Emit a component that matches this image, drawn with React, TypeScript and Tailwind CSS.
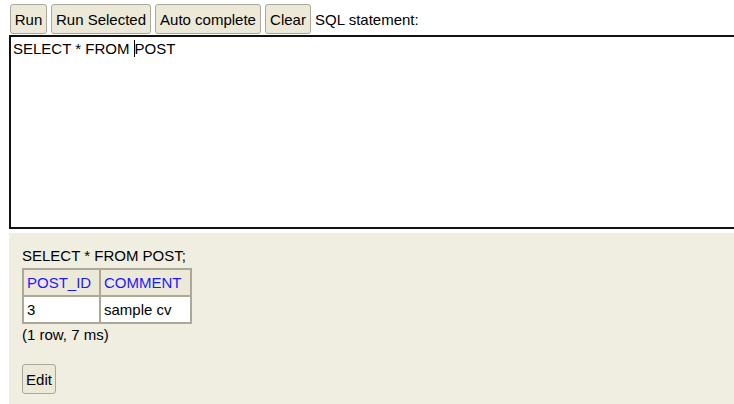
import React from 'react'

const FONT = { fontFamily: '"Liberation Sans", Arial, sans-serif' }

function ToolButton({ label, width }: { label: string; width: string }) {
  return (
    <button
      type="button"
      className={`h-[30px] ${width} shrink-0 rounded-[3px] border border-[#aca899] bg-[#ece9d8] text-center text-[15px] leading-[17px] text-black`}
    >
      {label}
    </button>
  )
}

export default function App() {
  return (
    <div className="h-[404px] w-[734px] overflow-hidden bg-white pl-[9px] text-[15px] leading-[17px] text-black" style={FONT}>
      <div className="flex items-center gap-[4px] pl-px pt-[4px]">
        <ToolButton label="Run" width="w-[37px]" />
        <ToolButton label="Run Selected" width="w-[100px]" />
        <ToolButton label="Auto complete" width="w-[106px]" />
        <ToolButton label="Clear" width="w-[46px]" />
        <span className="whitespace-nowrap">SQL statement:</span>
      </div>

      <div className="mt-px h-[194px] w-[760px] border-2 border-[#111] bg-white pl-[2px] pt-[3px]">
        <span>SELECT * FROM </span>
        <span className="border-l border-black">POST</span>
      </div>

      <div className="mt-[4px] h-[200px] w-[740px] bg-[#f0eee0] pl-[13px] pt-[14px]">
        <div>SELECT * FROM POST;</div>
        <table className="mt-[4px] w-[170px] table-fixed border-separate border-spacing-0 border border-[#aca899]">
          <thead>
            <tr>
              <th className="w-[77px] border border-[#aca899] bg-[#ece9d8] px-[3px] py-[4px] text-left font-normal text-[#1a1aff]">
                POST_ID
              </th>
              <th className="w-[91px] border border-[#aca899] bg-[#ece9d8] px-[3px] py-[4px] text-left font-normal text-[#1a1aff]">
                COMMENT
              </th>
            </tr>
          </thead>
          <tbody>
            <tr>
              <td className="border border-[#aca899] bg-white px-[3px] py-[4px]">3</td>
              <td className="border border-[#aca899] bg-white px-[3px] py-[4px]">sample cv</td>
            </tr>
          </tbody>
        </table>
        <div className="mt-[2px]">(1 row, 7 ms)</div>
        <button
          type="button"
          className="mt-[21px] h-[30px] w-[34px] rounded-[3px] border border-[#aca899] bg-[#ece9d8] text-center text-[15px] leading-[17px] text-black"
        >
          Edit
        </button>
      </div>
    </div>
  )
}
